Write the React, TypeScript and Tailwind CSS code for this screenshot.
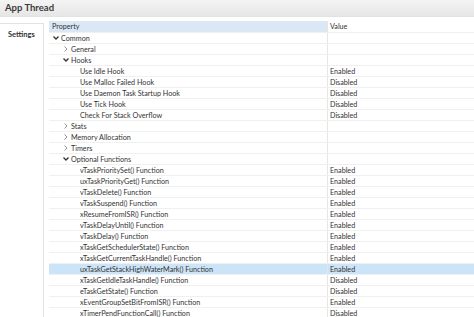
import React from "react";

type Row = {
  label: string;
  value?: string;
  level: number;
  kind?: "open" | "closed";
  selected?: boolean;
};

const rows: Row[] = [
  { label: "Common", level: 0, kind: "open" },
  { label: "General", level: 1, kind: "closed" },
  { label: "Hooks", level: 1, kind: "open" },
  { label: "Use Idle Hook", value: "Enabled", level: 2 },
  { label: "Use Malloc Failed Hook", value: "Disabled", level: 2 },
  { label: "Use Daemon Task Startup Hook", value: "Disabled", level: 2 },
  { label: "Use Tick Hook", value: "Disabled", level: 2 },
  { label: "Check For Stack Overflow", value: "Disabled", level: 2 },
  { label: "Stats", level: 1, kind: "closed" },
  { label: "Memory Allocation", level: 1, kind: "closed" },
  { label: "Timers", level: 1, kind: "closed" },
  { label: "Optional Functions", level: 1, kind: "open" },
  { label: "vTaskPrioritySet() Function", value: "Enabled", level: 2 },
  { label: "uxTaskPriorityGet() Function", value: "Enabled", level: 2 },
  { label: "vTaskDelete() Function", value: "Enabled", level: 2 },
  { label: "vTaskSuspend() Function", value: "Enabled", level: 2 },
  { label: "xResumeFromISR() Function", value: "Enabled", level: 2 },
  { label: "vTaskDelayUntil() Function", value: "Enabled", level: 2 },
  { label: "vTaskDelay() Function", value: "Enabled", level: 2 },
  { label: "xTaskGetSchedulerState() Function", value: "Enabled", level: 2 },
  { label: "xTaskGetCurrentTaskHandle() Function", value: "Enabled", level: 2 },
  { label: "uxTaskGetStackHighWaterMark() Function", value: "Enabled", level: 2, selected: true },
  { label: "xTaskGetIdleTaskHandle() Function", value: "Disabled", level: 2 },
  { label: "eTaskGetState() Function", value: "Disabled", level: 2 },
  { label: "xEventGroupSetBitFromISR() Function", value: "Enabled", level: 2 },
  { label: "xTimerPendFunctionCall() Function", value: "Disabled", level: 2 },
];

const Chevron = ({ open }: { open: boolean }) => (
  <svg width="8" height="8" viewBox="0 0 8 8" className="shrink-0">
    {open ? (
      <path d="M1.5 2.5 L4 5 L6.5 2.5" fill="none" stroke="#333" strokeWidth="1.3" />
    ) : (
      <path d="M2.5 1.5 L5 4 L2.5 6.5" fill="none" stroke="#888" strokeWidth="0.9" />
    )}
  </svg>
);

const indents = ["pl-[3px]", "pl-[13px]", "pl-[31px]"];

const App = () => {
  return (
    <div
      className="w-[474px] h-[317px] overflow-hidden bg-white text-[#333]"
      style={{ fontFamily: "Lato, 'Noto Sans', sans-serif" }}
    >
      <div className="h-[17px] bg-gradient-to-b from-[#f4f4f4] to-[#e6e6e6] flex items-center pl-[5px] text-[9.5px] font-bold text-[#3a3a3a] border-b border-[#e2e2e2]">
        App Thread
      </div>
      <div className="flex">
        <div className="w-[44px] shrink-0 pt-[6px]">
          <div className="h-[22px] border-t border-r border-[#e2e2e2] bg-white flex items-center pl-[8px] text-[7.5px] font-bold">
            Settings
          </div>
          <div className="h-[300px] border-r border-[#e2e2e2]"></div>
        </div>
        <div className="flex-1 pl-[5px] pt-[4px]">
          <div className="flex h-[11px] text-[7.2px] leading-[11px]">
            <div className="w-[279px] bg-[#dae8f6] pl-[3px] border-r border-[#e6e6e6]">Property</div>
            <div className="flex-1 pl-[2px]">Value</div>
          </div>
          {rows.map((r) => (
            <div
              key={r.label}
              className={`flex h-[11px] text-[7.2px] leading-[11px] border-t border-[#f0f0f0] ${r.selected ? "bg-[#cce4f7]" : ""}`}
            >
              <div className={`w-[279px] flex items-center gap-[1px] whitespace-nowrap border-r border-[#e6e6e6] ${indents[r.level]}`}>
                {r.kind && <Chevron open={r.kind === "open"} />}
                <span>{r.label}</span>
              </div>
              <div className="flex-1 pl-[2px]">{r.value}</div>
            </div>
          ))}
        </div>
      </div>
    </div>
  );
};

export default App;
